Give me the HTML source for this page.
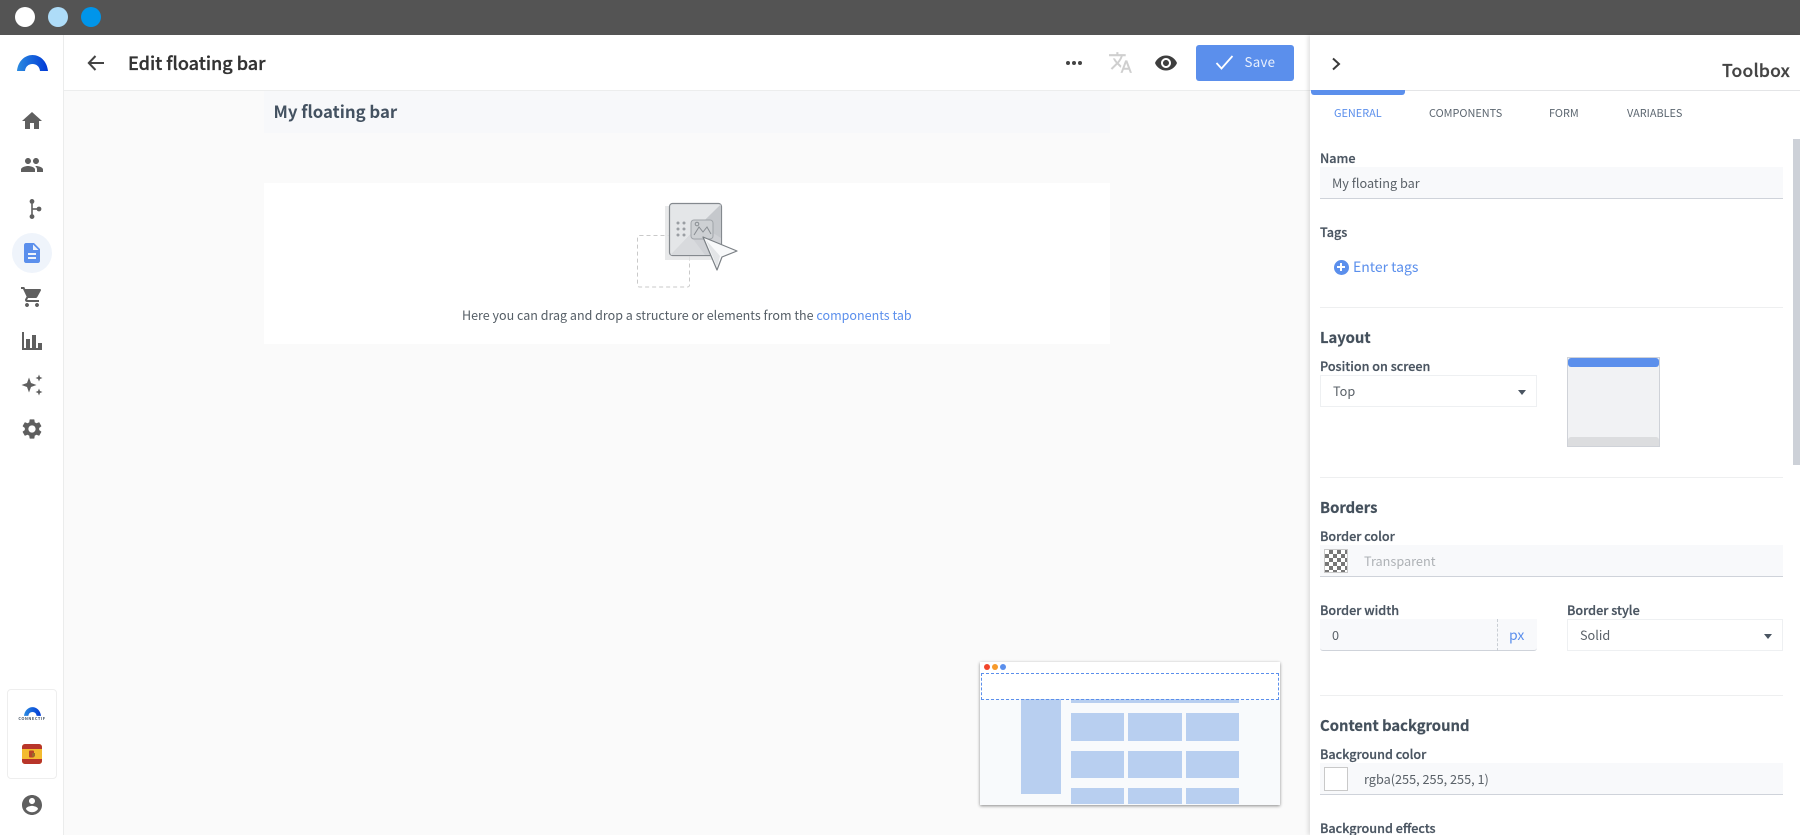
<!DOCTYPE html>
<html lang="en"><head><meta charset="utf-8"><title>Edit floating bar</title>
<style>
*{box-sizing:border-box}
html,body{margin:0;padding:0;width:1800px;height:835px;overflow:hidden;background:#fafafa}
body{position:relative;font-family:"Noto Sans CJK JP","Liberation Sans",sans-serif;color:#444}
.a{position:absolute}
.t{position:absolute;white-space:nowrap;line-height:20px;height:20px}
.lab{font-size:12.6px;font-weight:500;color:#4a5561;-webkit-text-stroke:.25px #4a5561}
.h{font-size:14.8px;font-weight:700;color:#44505c;-webkit-text-stroke:.2px #44505c}
.tab{font-size:10.9px;color:#5c6670}
.val{font-size:12.7px;color:#5a6168}
.hr{position:absolute;left:1320px;width:463px;height:1px;background:#eeeff0}
.inp{position:absolute;background:#f8f9fb;border-bottom:1px solid #cfd3da}
.sel{position:absolute;background:#fff;border:1px solid #eef0f2}
.arrow{position:absolute;width:0;height:0;border-left:4.5px solid transparent;border-right:4.5px solid transparent;border-top:5px solid #4a5561}
svg{position:absolute;display:block}
</style></head><body>
<div class="a" style="left:0;top:0;width:1800px;height:35px;background:#545454"></div>
<div class="a" style="left:15px;top:7px;width:20px;height:20px;border-radius:50%;background:#fff"></div>
<div class="a" style="left:48px;top:7px;width:20px;height:20px;border-radius:50%;background:#aedcf8"></div>
<div class="a" style="left:81px;top:7px;width:20px;height:20px;border-radius:50%;background:#0095ea"></div>

<div class="a" style="left:0;top:35px;width:1310px;height:55px;background:#fff"></div>
<div class="a" style="left:0;top:90px;width:1310px;height:1px;background:#eceded"></div>
<div class="a" style="left:0;top:35px;width:64px;height:800px;background:#fff;border-right:1px solid #ebecec"></div>

<svg style="left:17px;top:55px" width="31" height="16" viewBox="0 0 31 16"><defs><linearGradient id="g" x1="0" x2="1" y1="0" y2="0"><stop offset="0" stop-color="#2b8be0"/><stop offset="1" stop-color="#0039d6"/></linearGradient></defs><path d="M0 16C1 6 8 0 15.500 0S30 6 31 16H23C22.500 11.500 19.500 9 15.500 9S8.500 11.500 8 16Z" fill="url(#g)"/></svg>

<svg style="left:20px;top:109px" width="24" height="24" viewBox="0 0 24 24" fill="#5f5f5f"><path d="M10 20v-6h4v6h5v-8h3L12 3 2 12h3v8z"/></svg>
<svg style="left:20px;top:153px" width="24" height="24" viewBox="0 0 24 24" fill="#5f5f5f"><path d="M16 11c1.660 0 2.990-1.340 2.990-3S17.660 5 16 5c-1.660 0-3 1.340-3 3s1.340 3 3 3zm-8 0c1.660 0 2.990-1.340 2.990-3S9.660 5 8 5C6.340 5 5 6.340 5 8s1.340 3 3 3zm0 2c-2.330 0-7 1.170-7 3.500V19h14v-2.500c0-2.330-4.670-3.500-7-3.500zm8 0c-.29 0-.62.02-.97.05 1.160.84 1.970 1.970 1.970 3.450V19h6v-2.500c0-2.330-4.670-3.500-7-3.500z"/></svg>
<svg style="left:21px;top:197px" width="24" height="24" viewBox="0 0 24 24" fill="#5f5f5f"><rect x="10.200" y="4" width="1.600" height="16"/><rect x="11" y="11.200" width="7" height="1.600"/><circle cx="11" cy="4.400" r="2.400"/><circle cx="11" cy="19.600" r="2.400"/><circle cx="18" cy="12" r="2.400"/></svg>
<div class="a" style="left:12px;top:233px;width:40px;height:40px;border-radius:50%;background:#eff4fb"></div>
<svg style="left:20px;top:241px" width="24" height="24" viewBox="0 0 24 24" fill="#5b8fec"><path d="M14 2H6c-1.100 0-1.990.9-1.990 2L4 20c0 1.100.89 2 1.990 2H18c1.100 0 2-.9 2-2V8l-6-6zm2 16H8v-2h8v2zm0-4H8v-2h8v2zm-3-5V3.500L18.500 9H13z"/></svg>
<svg style="left:20px;top:285px" width="24" height="24" viewBox="0 0 24 24" fill="#5f5f5f"><path d="M7 18c-1.100 0-1.990.9-1.990 2S5.900 22 7 22s2-.9 2-2-.9-2-2-2zM1 2v2h2l3.600 7.590-1.350 2.450c-.16.28-.25.61-.25.96 0 1.100.9 2 2 2h12v-2H7.420c-.14 0-.25-.11-.25-.25l.03-.12.9-1.630h7.450c.75 0 1.410-.41 1.750-1.030l3.580-6.490c.08-.14.12-.31.12-.48 0-.55-.45-1-1-1H5.210l-.94-2H1zm16 16c-1.100 0-1.990.9-1.990 2s.89 2 1.990 2 2-.9 2-2-.9-2-2-2z"/></svg>
<svg style="left:20px;top:329px" width="24" height="24" viewBox="0 0 24 24" fill="#5f5f5f"><path d="M2 3h2v16h18v2H2z"/><rect x="6" y="10" width="4" height="10"/><rect x="12" y="6" width="4" height="14"/><rect x="18" y="14" width="4" height="6"/></svg>
<svg style="left:20px;top:373px" width="24" height="24" viewBox="0 0 24 24" fill="#5f5f5f"><path d="M9 4.500L11 10 16.500 12 11 14 9 19.500 7 14 1.500 12 7 10Z"/><path d="M19 1.500L20 4 22.500 5 20 6 19 8.500 18 6 15.500 5 18 4Z"/><path d="M19 15.500L20 18 22.500 19 20 20 19 22.500 18 20 15.500 19 18 18Z"/></svg>
<svg style="left:20px;top:417px" width="24" height="24" viewBox="0 0 24 24" fill="#5f5f5f"><path d="M19.140 12.940c.04-.3.06-.61.06-.94 0-.32-.02-.64-.07-.94l2.030-1.580c.18-.14.23-.41.12-.61l-1.920-3.320c-.12-.22-.37-.29-.59-.22l-2.390.96c-.5-.38-1.030-.7-1.620-.94l-.36-2.540c-.04-.24-.24-.41-.48-.41h-3.840c-.24 0-.43.17-.47.41l-.36 2.540c-.59.24-1.130.57-1.620.94l-2.390-.96c-.22-.08-.47 0-.59.22L2.740 8.870c-.12.21-.08.47.12.61l2.030 1.580c-.05.3-.09.63-.09.94s.02.64.07.94l-2.030 1.580c-.18.14-.23.41-.12.61l1.920 3.320c.12.22.37.29.59.22l2.390-.96c.5.38 1.030.7 1.620.94l.36 2.540c.05.24.24.41.48.41h3.840c.24 0 .44-.17.47-.41l.36-2.540c.59-.24 1.130-.56 1.620-.94l2.390.96c.22.08.47 0 .59-.22l1.920-3.320c.12-.22.07-.47-.12-.61l-2.010-1.580zM12 15.600c-1.980 0-3.600-1.620-3.600-3.600s1.620-3.600 3.600-3.600 3.600 1.620 3.600 3.600-1.620 3.600-3.600 3.600z"/></svg>

<div class="a" style="left:7px;top:689px;width:50px;height:90px;border:1px solid #eeeeee;border-radius:4px;background:#fff"></div>
<svg style="left:24px;top:707px" width="17" height="9" viewBox="0 0 31 16"><path d="M0 16C1 6 8 0 15.500 0S30 6 31 16H23C22.500 11.500 19.500 9 15.500 9S8.500 11.500 8 16Z" fill="url(#g)"/></svg>
<div class="t" style="left:14px;top:709px;width:36px;text-align:center;font-size:4px;font-weight:700;letter-spacing:.5px;color:#445261">CONNECTIF</div>
<svg style="left:22px;top:744px" width="20" height="20" viewBox="0 0 20 20"><rect width="20" height="20" rx="3" fill="#f3bb2f"/><path d="M0 5V3a3 3 0 0 1 3-3h14a3 3 0 0 1 3 3v2zM0 15v2a3 3 0 0 0 3 3h14a3 3 0 0 0 3-3v-2z" fill="#b8352a"/><rect x="7" y="6.500" width="5" height="7" rx="1" fill="#b8432a"/><rect x="10" y="9" width="3" height="3.500" fill="#9a6b2a"/></svg>
<svg style="left:20px;top:793px" width="24" height="24" viewBox="0 0 24 24" fill="#5f5f5f"><path d="M12 2C6.480 2 2 6.480 2 12s4.480 10 10 10 10-4.480 10-10S17.520 2 12 2zm0 3c1.660 0 3 1.340 3 3s-1.340 3-3 3-3-1.340-3-3 1.340-3 3-3zm0 14.200c-2.500 0-4.710-1.280-6-3.220.03-1.990 4-3.080 6-3.080 1.990 0 5.970 1.090 6 3.080-1.290 1.940-3.500 3.220-6 3.220z"/></svg>

<svg style="left:86px;top:54px" width="20" height="18" viewBox="0 0 20 18" fill="none" stroke="#444" stroke-width="2"><path d="M18 9H3M9.500 2 2.800 9l6.700 7"/></svg>
<div class="t" style="left:128px;top:53px;font-size:18px;font-weight:500;color:#333;-webkit-text-stroke:.35px #333">Edit floating bar</div>

<div class="a" style="left:1066px;top:61px;width:4px;height:4px;border-radius:50%;background:#444;box-shadow:6px 0 0 #444,12px 0 0 #444"></div>
<svg style="left:1108px;top:50px" width="25" height="25" viewBox="0 0 24 24" fill="#cfcfcf"><path d="M12.870 15.070l-2.540-2.510.03-.03c1.740-1.940 2.980-4.170 3.710-6.530H17V4h-7V2H8v2H1v1.990h11.170C11.500 7.920 10.440 9.750 9 11.350 8.070 10.320 7.300 9.190 6.690 8h-2c.73 1.630 1.730 3.170 2.980 4.560l-5.090 5.020L4 19l5-5 3.110 3.110.76-2.040zM18.500 10h-2L12 22h2l1.120-3h4.750L21 22h2l-4.500-12zm-2.620 7l1.620-4.330L19.120 17h-3.240z"/></svg>
<svg style="left:1154px;top:51px" width="24" height="24" viewBox="0 0 24 24" fill="#3e3e3e"><path d="M12 4.500C7 4.500 2.730 7.610 1 12c1.730 4.390 6 7.500 11 7.500s9.270-3.110 11-7.500c-1.730-4.390-6-7.500-11-7.500zM12 17c-2.760 0-5-2.240-5-5s2.240-5 5-5 5 2.240 5 5-2.240 5-5 5zm0-8c-1.660 0-3 1.340-3 3s1.340 3 3 3 3-1.340 3-3-1.340-3-3-3z"/></svg>
<div class="a" style="left:1196px;top:45px;width:98px;height:36px;background:#5b8fec;border-radius:3px"></div>
<svg style="left:1215px;top:54px" width="19" height="17" viewBox="0 0 19 17" fill="none" stroke="#fff" stroke-width="1.800"><path d="M1.500 9 6.500 14.500 17.500 2"/></svg>
<div class="t" style="left:1244.500px;top:52px;font-size:13.3px;color:#e9f0fd;letter-spacing:.3px">Save</div>

<div class="a" style="left:264px;top:91px;width:846px;height:42px;background:#f7f8fa"></div>
<div class="t" style="left:273.500px;top:101px;font-size:16.8px;font-weight:700;color:#445261">My floating bar</div>
<div class="a" style="left:264px;top:183px;width:846px;height:161px;background:#fff"></div>

<svg style="left:630px;top:198px" width="115" height="90" viewBox="0 0 115 90">
<rect x="7.500" y="37.500" width="52" height="51.500" rx="2" fill="none" stroke="#c9c9c9" stroke-dasharray="4 3"/>
<rect x="35" y="8" width="54" height="54" fill="#e2e3e5" opacity=".8"/>
<rect x="39.500" y="5.500" width="52" height="52" rx="3" fill="#e4e6e8" stroke="#84898e" stroke-width="1.200"/>
<path d="M91 6.200V57H40.500L65.500 31Z" fill="#cfd1d5"/><path d="M91 6.200V40L70 27Z" fill="#c5c8cc"/><path d="M40.500 57H75L60 37Z" fill="#d8dadd"/>
<g fill="#9a9ea3"><circle cx="48" cy="25" r="1.500"/><circle cx="54" cy="25" r="1.500"/><circle cx="48" cy="31" r="1.500"/><circle cx="54" cy="31" r="1.500"/><circle cx="48" cy="37" r="1.500"/><circle cx="54" cy="37" r="1.500"/></g>
<rect x="61" y="22" width="22" height="19" rx="3" fill="#cdd0d3" stroke="#a0a4a9"/>
<path d="M64 37 69 29 73 34 77 29 81 36" fill="none" stroke="#888d92"/><circle cx="67" cy="26" r="1.800" fill="none" stroke="#888d92"/>
<path d="M73 39 107 53 92 59 87 72Z" fill="#f8f9fa" stroke="#7b8085" stroke-width="1.200" stroke-linejoin="round"/>
<path d="M76 42 90 58 87 69Z" fill="#e3e5e7"/>
</svg>
<div class="t" style="left:462px;top:305px;font-size:12.5px;letter-spacing:.01px;color:#555e66">Here you can drag and drop a structure or elements from the <span style="color:#5b8fec">components tab</span></div>

<div class="a" style="left:980px;top:662px;width:300px;height:143px;background:#f8fafc;box-shadow:0 1px 3px rgba(0,0,0,.45)"></div>
<div class="a" style="left:980px;top:662px;width:300px;height:37px;background:#fff"></div>
<div class="a" style="left:984px;top:664px;width:6px;height:6px;border-radius:50%;background:#f2452b"></div>
<div class="a" style="left:992px;top:664px;width:6px;height:6px;border-radius:50%;background:#f79a2a"></div>
<div class="a" style="left:1000px;top:664px;width:6px;height:6px;border-radius:50%;background:#5b8fec"></div>
<div class="a" style="left:1021px;top:699px;width:40px;height:95px;background:#b8cff0"></div>
<div class="a" style="left:1071px;top:699px;width:168px;height:4px;background:#b8cff0"></div>
<div class="a" style="left:1071px;top:713px;width:53px;height:28px;background:#b8cff0"></div>
<div class="a" style="left:1128px;top:713px;width:54px;height:28px;background:#b8cff0"></div>
<div class="a" style="left:1186px;top:713px;width:53px;height:28px;background:#b8cff0"></div>
<div class="a" style="left:1071px;top:751px;width:53px;height:27px;background:#b8cff0"></div>
<div class="a" style="left:1128px;top:751px;width:54px;height:27px;background:#b8cff0"></div>
<div class="a" style="left:1186px;top:751px;width:53px;height:27px;background:#b8cff0"></div>
<div class="a" style="left:1071px;top:788px;width:53px;height:16px;background:#b8cff0"></div>
<div class="a" style="left:1128px;top:788px;width:54px;height:16px;background:#b8cff0"></div>
<div class="a" style="left:1186px;top:788px;width:53px;height:16px;background:#b8cff0"></div>
<div class="a" style="left:981px;top:673px;width:298px;height:27px;border:1px dashed #5b8fec"></div>

<div class="a" style="left:1310px;top:35px;width:490px;height:800px;background:#fff;box-shadow:-2px 0 4px rgba(0,0,0,.12)"></div>
<svg style="left:1330px;top:56px" width="12" height="16" viewBox="0 0 12 16" fill="none" stroke="#3a3a3a" stroke-width="2"><path d="M3 2.500 9 8 3 13.500"/></svg>
<div class="t" style="left:1722px;top:61px;font-size:17.5px;font-weight:500;color:#444;letter-spacing:.2px;-webkit-text-stroke:.3px #444">Toolbox</div>
<div class="a" style="left:1310px;top:90px;width:490px;height:1px;background:#e4e5e7"></div>
<div class="a" style="left:1311px;top:90px;width:94px;height:5px;background:#5b8fec;border-radius:0 0 3px 3px"></div>
<div class="t tab" style="left:1334px;top:103px;color:#5b8fec">GENERAL</div>
<div class="t tab" style="left:1429px;top:103px">COMPONENTS</div>
<div class="t tab" style="left:1549px;top:103px">FORM</div>
<div class="t tab" style="left:1627px;top:103px">VARIABLES</div>
<div class="a" style="left:1793px;top:139px;width:7px;height:326px;background:#cdd1d8"></div>

<div class="t lab" style="left:1320px;top:148px">Name</div>
<div class="inp" style="left:1320px;top:167px;width:463px;height:32px"></div>
<div class="t val" style="left:1332px;top:173px">My floating bar</div>
<div class="t lab" style="left:1320px;top:222px">Tags</div>
<div class="a" style="left:1333.500px;top:259.500px;width:15px;height:15px;border-radius:50%;background:#5b8fec"></div>
<div class="a" style="left:1337px;top:266px;width:8px;height:2px;background:#fff"></div>
<div class="a" style="left:1340px;top:263px;width:2px;height:8px;background:#fff"></div>
<div class="t" style="left:1353px;top:257px;font-size:14px;color:#5b8fec">Enter tags</div>
<div class="hr" style="top:307px"></div>

<div class="t h" style="left:1320px;top:328px">Layout</div>
<div class="t lab" style="left:1320px;top:356px">Position on screen</div>
<div class="sel" style="left:1320px;top:375px;width:217px;height:32px"></div>
<div class="t val" style="left:1333px;top:381px">Top</div>
<div class="arrow" style="left:1518px;top:390px"></div>
<div class="a" style="left:1567px;top:357px;width:93px;height:90px;background:#f1f2f4;border:1px solid #cfd2d8"></div>
<div class="a" style="left:1568px;top:358px;width:91px;height:9px;background:#5b8fec;border-radius:3px"></div>
<div class="a" style="left:1568px;top:437px;width:91px;height:9px;background:#dcdddf;border-radius:3px 3px 0 0"></div>
<div class="hr" style="top:477px"></div>

<div class="t h" style="left:1320px;top:498px">Borders</div>
<div class="t lab" style="left:1320px;top:526px">Border color</div>
<div class="inp" style="left:1320px;top:545px;width:463px;height:32px"></div>
<div class="a" style="left:1324px;top:549px;width:24px;height:24px;border:1px solid #c9c9c9;background:conic-gradient(#777 25%,#fff 0 50%,#777 0 75%,#fff 0) 0 0/8px 8px"></div>
<div class="t val" style="left:1364px;top:551px;color:#adb1b5">Transparent</div>
<div class="t lab" style="left:1320px;top:600px">Border width</div>
<div class="inp" style="left:1320px;top:619px;width:217px;height:32px;border-radius:0 0 3px 3px"></div>
<div class="a" style="left:1497px;top:619px;height:32px;width:0;border-left:1px dashed #c9ced4"></div>
<div class="t val" style="left:1332px;top:625px">0</div>
<div class="t" style="left:1509px;top:625px;font-size:14px;color:#5b8fec">px</div>
<div class="t lab" style="left:1567px;top:600px">Border style</div>
<div class="sel" style="left:1567px;top:619px;width:216px;height:32px"></div>
<div class="t val" style="left:1580px;top:625px">Solid</div>
<div class="arrow" style="left:1764px;top:634px"></div>
<div class="hr" style="top:695px"></div>

<div class="t h" style="left:1320px;top:716px">Content background</div>
<div class="t lab" style="left:1320px;top:744px">Background color</div>
<div class="inp" style="left:1320px;top:763px;width:463px;height:32px"></div>
<div class="a" style="left:1324px;top:767px;width:24px;height:24px;border:1px solid #c9c9c9;background:#fff"></div>
<div class="t val" style="left:1364px;top:769px">rgba(255, 255, 255, 1)</div>
<div class="t lab" style="left:1320px;top:818px">Background effects</div>
</body></html>
